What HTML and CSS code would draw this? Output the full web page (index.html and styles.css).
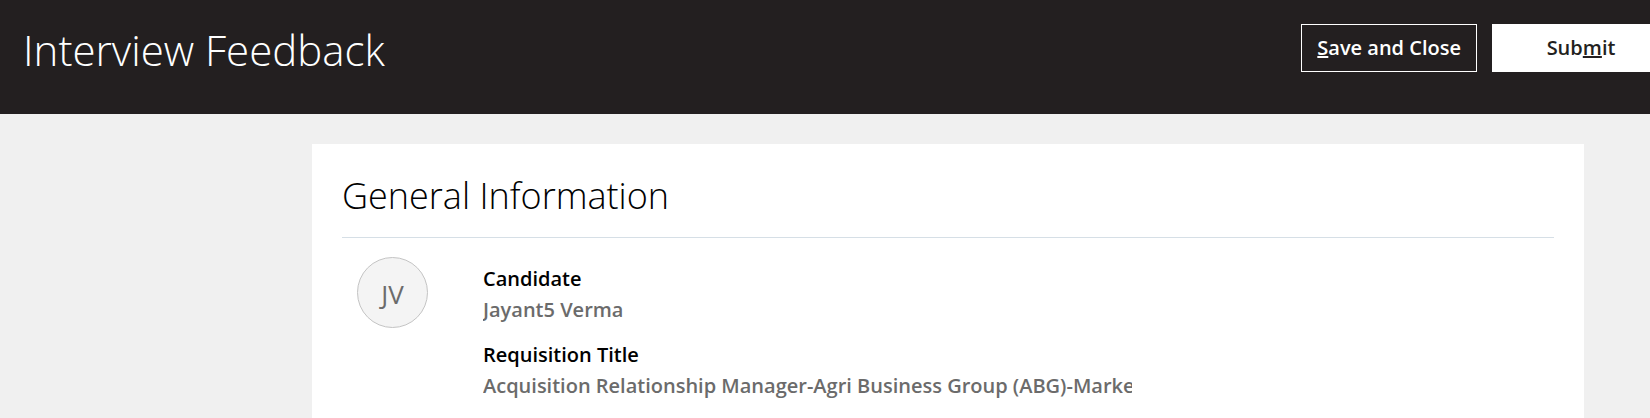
FILE: index.html
```html
<!DOCTYPE html>
<html lang="en">
<head>
  <meta charset="UTF-8" />
  <meta name="viewport" content="width=device-width, initial-scale=1.0" />
  <title>Interview Feedback</title>
  <link rel="stylesheet" href="styles.css">
</head>
<body>
  <header class="page-header">
    <h1>Interview Feedback</h1>
    <div class="actions">
      <button type="button" class="btn" accesskey="s"><u>S</u>ave and Close</button>
      <button type="button" class="btn btn-submit" accesskey="m">Sub<u>m</u>it</button>
    </div>
  </header>

  <main>
    <section class="card">
      <h2>General Information</h2>
      <div class="person">
        <div class="avatar">JV</div>
        <dl class="details">
          <dt>Candidate</dt>
          <dd>Jayant5 Verma</dd>
          <dt>Requisition Title</dt>
          <dd>Acquisition Relationship Manager-Agri Business Group (ABG)-Marke</dd>
        </dl>
      </div>
    </section>
  </main>
</body>
</html>
```
FILE: styles.css
```css
* {
  box-sizing: border-box;
}
body {
  margin: 0;
  min-height: 100vh;
  display: flex;
  flex-direction: column;
  font-family: "Open Sans", "Noto Sans", sans-serif;
  background: #f0f0f0;
  color: #000;
}
.page-header {
  display: flex;
  justify-content: space-between;
  align-items: flex-start;
  padding: 24px 0 38px 23px;
  background: #231f20;
  color: #fff;
}
h1 {
  margin: 0;
  font-size: 42px;
  line-height: 52px;
  font-weight: 300;
}
.actions {
  display: flex;
  gap: 15px;
}
.btn {
  height: 48px;
  padding: 0 15px 2px;
  border: 1px solid #fff;
  background: #231f20;
  color: #fff;
  font-family: inherit;
  font-size: 20px;
  font-weight: 600;
}
.btn u {
  text-decoration-thickness: 2px;
}
.btn-submit {
  width: 158px;
  padding: 0 0 2px 20px;
  background: #fff;
  color: #231f20;
}
main {
  flex: 1;
  display: flex;
  padding: 30px 66px 0 312px;
}
.card {
  flex: 1;
  min-width: 0;
  padding: 24px 30px 0;
  background: #fff;
}
h2 {
  margin: 0;
  padding-bottom: 13px;
  border-bottom: 1px solid #d6dfe6;
  font-size: 36px;
  line-height: 56px;
  font-weight: 300;
}
.person {
  display: flex;
  gap: 55px;
  padding: 19px 15px 0;
}
.avatar {
  flex: none;
  width: 71px;
  height: 71px;
  border: 1px solid #c4c4c4;
  border-radius: 50%;
  background: #f4f4f4;
  color: #6b6b6b;
  font-size: 26px;
  line-height: 72px;
  text-align: center;
}
.details {
  margin: 6px 0 0;
  width: 649px;
  font-size: 20px;
  line-height: 31px;
  font-weight: 600;
}
dd {
  margin: 0 0 14px;
  color: #6b6b6b;
  white-space: nowrap;
  overflow: hidden;
}
dd:last-child {
  margin-bottom: 0;
}
```
